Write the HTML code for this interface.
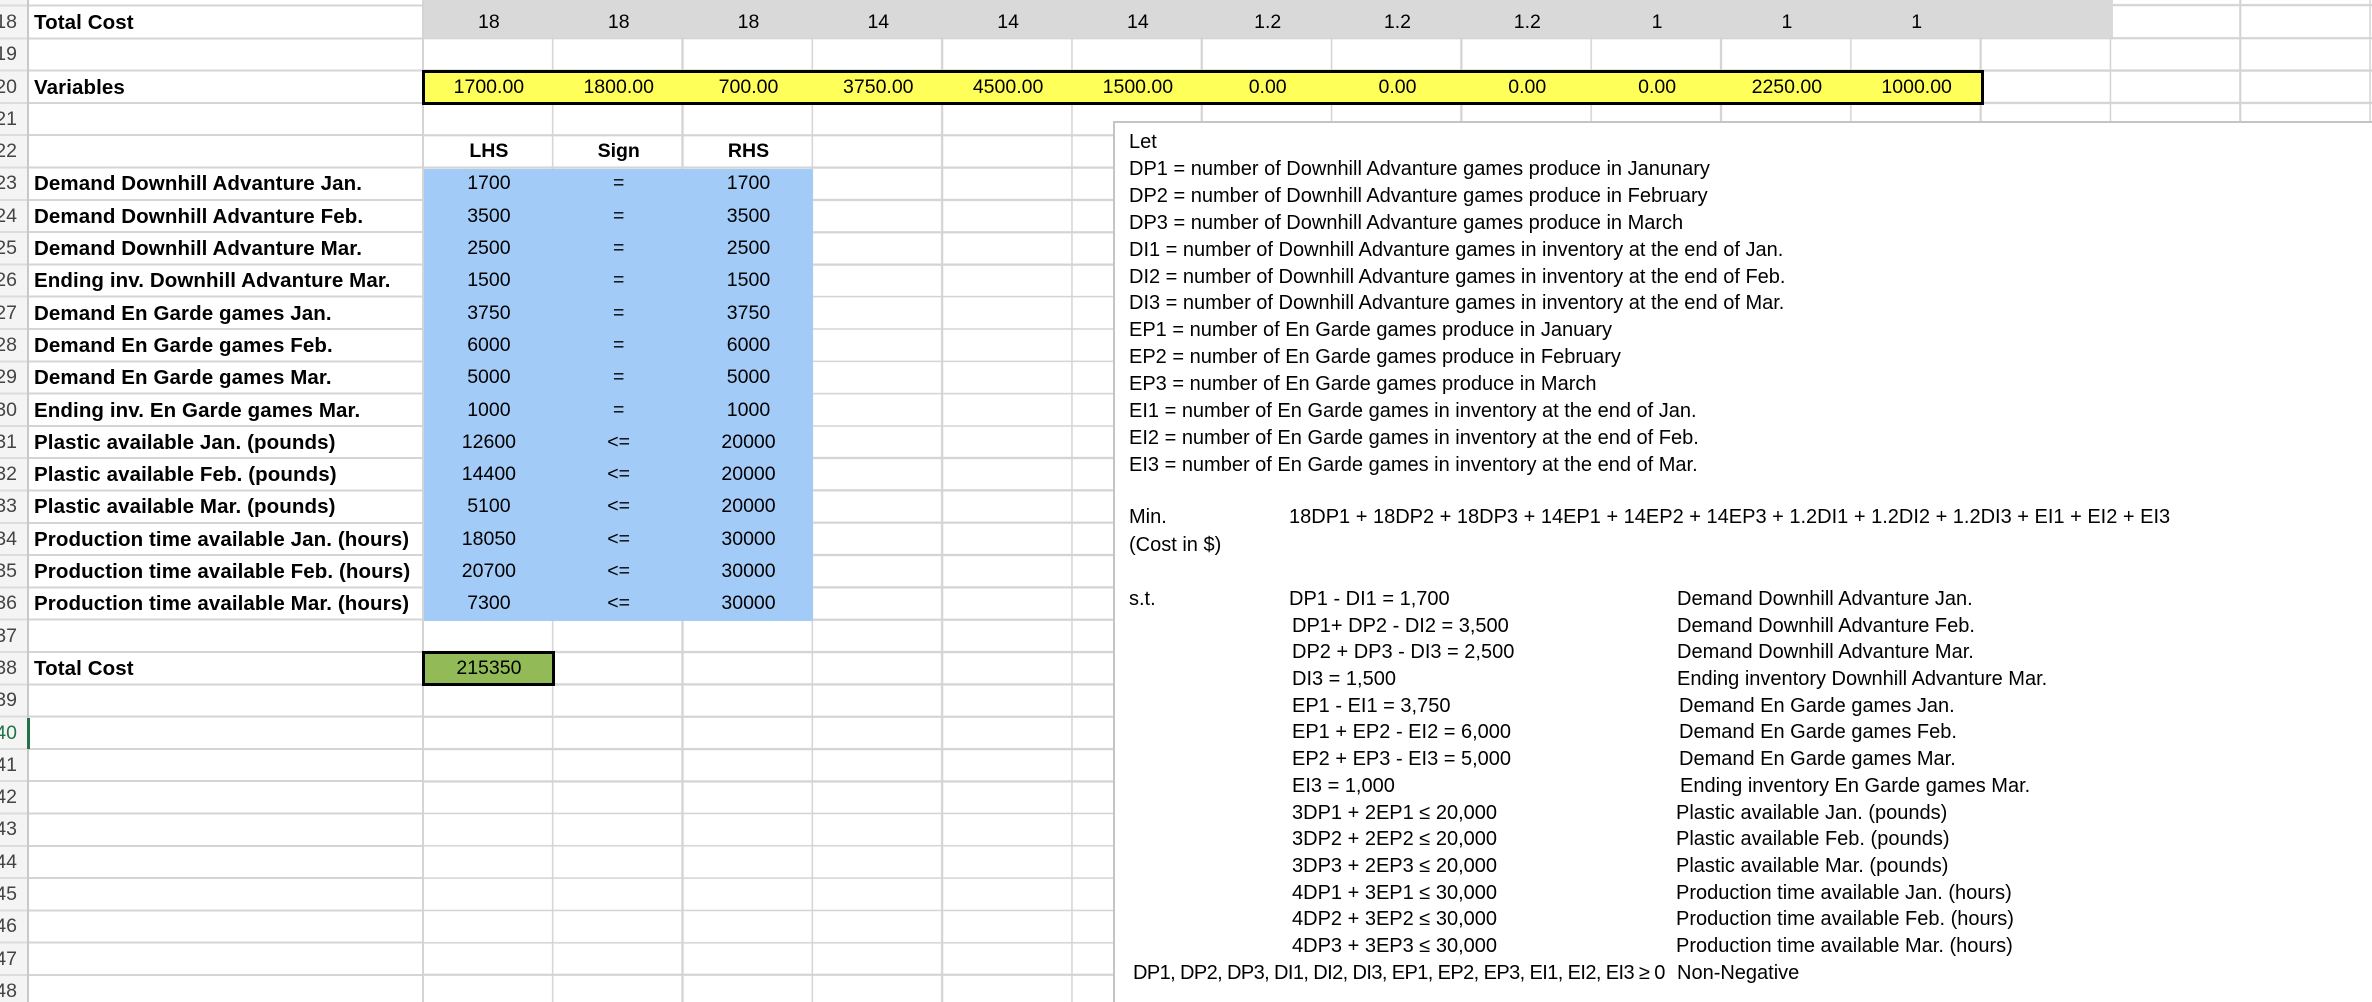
<!DOCTYPE html>
<html><head><meta charset="utf-8"><style>
*{margin:0;padding:0;box-sizing:border-box}
html{width:2372px;height:1002px;overflow:hidden}
body{width:2372px;height:1002px;overflow:hidden;position:relative;background:#fff;font-family:"Liberation Sans",sans-serif;font-size:19.5px;color:#000;
background-image:repeating-linear-gradient(180deg,transparent 0,transparent 30.3px,#d4d4d4 30.3px,#d4d4d4 32.3px),repeating-linear-gradient(90deg,transparent 0,transparent 127.8px,#d4d4d4 127.8px,#d4d4d4 129.8px);
background-position:0 7px,424px 0}
#rn{position:absolute;left:0;top:0;width:29px;height:1002px;background-color:#f4f4f4;border-right:2px solid #c8c8c8;background-image:repeating-linear-gradient(180deg,transparent 0,transparent 30.3px,#dcdcdc 30.3px,#dcdcdc 32.3px);background-position:0 7px}
#ca{position:absolute;left:29px;top:0;width:395px;height:1002px;background-color:#fff;border-right:2px solid #d4d4d4;background-image:repeating-linear-gradient(180deg,transparent 0,transparent 30.3px,#d4d4d4 30.3px,#d4d4d4 32.3px);background-position:0 7px}
.ov{position:absolute}
#rows{position:absolute;left:0;top:-25.3px;width:2372px}
.r{height:32.3px;line-height:31px;display:flex;white-space:nowrap}
.n{width:29px;text-align:right;padding-right:12px;color:#444;overflow:hidden;font-size:19.5px;direction:rtl}
.a{width:395px;padding-left:5px;font-weight:bold;font-size:20.5px;letter-spacing:0.1px}
.c{width:129.8px;text-align:center}
.b{font-weight:bold}
#tb{position:absolute;left:1113px;top:121px;width:1270px;height:890px;background:#fff;border:2px solid #c4c4c4}
.t{position:absolute;white-space:nowrap;line-height:26px;font-size:20px}
</style></head><body>
<div id="rn"></div><div id="ca"></div>
<div class="ov" style="left:424px;top:0;width:1689px;height:37.3px;background:#d9d9d9"></div>
<div class="ov" style="left:422px;top:70px;width:1562px;height:35px;background:#ffff5a;border:3px solid #000"></div>
<div class="ov" style="left:424px;top:168.5px;width:389px;height:452px;background:#a3cbf7"></div>
<div class="ov" style="left:422px;top:651px;width:133px;height:35px;background:#92bb57;border:3px solid #000"></div>
<div class="ov" style="left:27px;top:717.6px;width:3px;height:31px;background:#217346"></div>
<div id="rows">
<div class="r"><span class="n">17</span></div>
<div class="r"><span class="n">18</span><span class="a">Total Cost</span><span class="c">18</span><span class="c">18</span><span class="c">18</span><span class="c">14</span><span class="c">14</span><span class="c">14</span><span class="c">1.2</span><span class="c">1.2</span><span class="c">1.2</span><span class="c">1</span><span class="c">1</span><span class="c">1</span></div>
<div class="r"><span class="n">19</span></div>
<div class="r"><span class="n">20</span><span class="a">Variables</span><span class="c">1700.00</span><span class="c">1800.00</span><span class="c">700.00</span><span class="c">3750.00</span><span class="c">4500.00</span><span class="c">1500.00</span><span class="c">0.00</span><span class="c">0.00</span><span class="c">0.00</span><span class="c">0.00</span><span class="c">2250.00</span><span class="c">1000.00</span></div>
<div class="r"><span class="n">21</span></div>
<div class="r"><span class="n">22</span><span class="a"></span><span class="c b">LHS</span><span class="c b">Sign</span><span class="c b">RHS</span></div>
<div class="r"><span class="n">23</span><span class="a">Demand Downhill Advanture Jan.</span><span class="c">1700</span><span class="c">=</span><span class="c">1700</span></div>
<div class="r"><span class="n">24</span><span class="a">Demand Downhill Advanture Feb.</span><span class="c">3500</span><span class="c">=</span><span class="c">3500</span></div>
<div class="r"><span class="n">25</span><span class="a">Demand Downhill Advanture Mar.</span><span class="c">2500</span><span class="c">=</span><span class="c">2500</span></div>
<div class="r"><span class="n">26</span><span class="a">Ending inv. Downhill Advanture Mar.</span><span class="c">1500</span><span class="c">=</span><span class="c">1500</span></div>
<div class="r"><span class="n">27</span><span class="a">Demand En Garde games Jan.</span><span class="c">3750</span><span class="c">=</span><span class="c">3750</span></div>
<div class="r"><span class="n">28</span><span class="a">Demand En Garde games Feb.</span><span class="c">6000</span><span class="c">=</span><span class="c">6000</span></div>
<div class="r"><span class="n">29</span><span class="a">Demand En Garde games Mar.</span><span class="c">5000</span><span class="c">=</span><span class="c">5000</span></div>
<div class="r"><span class="n">30</span><span class="a">Ending inv. En Garde games Mar.</span><span class="c">1000</span><span class="c">=</span><span class="c">1000</span></div>
<div class="r"><span class="n">31</span><span class="a">Plastic available Jan. (pounds)</span><span class="c">12600</span><span class="c">&lt;=</span><span class="c">20000</span></div>
<div class="r"><span class="n">32</span><span class="a">Plastic available Feb. (pounds)</span><span class="c">14400</span><span class="c">&lt;=</span><span class="c">20000</span></div>
<div class="r"><span class="n">33</span><span class="a">Plastic available Mar. (pounds)</span><span class="c">5100</span><span class="c">&lt;=</span><span class="c">20000</span></div>
<div class="r"><span class="n">34</span><span class="a">Production time available Jan. (hours)</span><span class="c">18050</span><span class="c">&lt;=</span><span class="c">30000</span></div>
<div class="r"><span class="n">35</span><span class="a">Production time available Feb. (hours)</span><span class="c">20700</span><span class="c">&lt;=</span><span class="c">30000</span></div>
<div class="r"><span class="n">36</span><span class="a">Production time available Mar. (hours)</span><span class="c">7300</span><span class="c">&lt;=</span><span class="c">30000</span></div>
<div class="r"><span class="n">37</span></div>
<div class="r"><span class="n">38</span><span class="a">Total Cost</span><span class="c">215350</span></div>
<div class="r"><span class="n">39</span></div>
<div class="r"><span class="n" style="color:#217346">40</span></div>
<div class="r"><span class="n">41</span></div>
<div class="r"><span class="n">42</span></div>
<div class="r"><span class="n">43</span></div>
<div class="r"><span class="n">44</span></div>
<div class="r"><span class="n">45</span></div>
<div class="r"><span class="n">46</span></div>
<div class="r"><span class="n">47</span></div>
<div class="r"><span class="n">48</span></div>
</div>
<div id="tb"></div>
<div class="t" style="left:1129px;top:129px">Let</div>
<div class="t" style="left:1129px;top:156px">DP1 = number of Downhill Advanture games produce in Janunary</div>
<div class="t" style="left:1129px;top:183px">DP2 = number of Downhill Advanture games produce in February</div>
<div class="t" style="left:1129px;top:210px">DP3 = number of Downhill Advanture games produce in March</div>
<div class="t" style="left:1129px;top:237px">DI1 = number of Downhill Advanture games in inventory at the end of Jan.</div>
<div class="t" style="left:1129px;top:264px">DI2 = number of Downhill Advanture games in inventory at the end of Feb.</div>
<div class="t" style="left:1129px;top:290px">DI3 = number of Downhill Advanture games in inventory at the end of Mar.</div>
<div class="t" style="left:1129px;top:317px">EP1 = number of En Garde games produce in January</div>
<div class="t" style="left:1129px;top:344px">EP2 = number of En Garde games produce in February</div>
<div class="t" style="left:1129px;top:371px">EP3 = number of En Garde games produce in March</div>
<div class="t" style="left:1129px;top:398px">EI1 = number of En Garde games in inventory at the end of Jan.</div>
<div class="t" style="left:1129px;top:425px">EI2 = number of En Garde games in inventory at the end of Feb.</div>
<div class="t" style="left:1129px;top:452px">EI3 = number of En Garde games in inventory at the end of Mar.</div>
<div class="t" style="left:1129px;top:504px">Min.</div>
<div class="t" style="left:1289px;top:504px">18DP1 + 18DP2 + 18DP3 + 14EP1 + 14EP2 + 14EP3 + 1.2DI1 + 1.2DI2 + 1.2DI3 + EI1 + EI2 + EI3</div>
<div class="t" style="left:1129px;top:532px">(Cost in $)</div>
<div class="t" style="left:1129px;top:586px">s.t.</div>
<div class="t" style="left:1289px;top:586px">DP1 - DI1 = 1,700</div>
<div class="t" style="left:1292px;top:613px">DP1+ DP2 - DI2 = 3,500</div>
<div class="t" style="left:1292px;top:639px">DP2 + DP3 - DI3 = 2,500</div>
<div class="t" style="left:1292px;top:666px">DI3 = 1,500</div>
<div class="t" style="left:1292px;top:693px">EP1 - EI1 = 3,750</div>
<div class="t" style="left:1292px;top:719px">EP1 + EP2 - EI2 = 6,000</div>
<div class="t" style="left:1292px;top:746px">EP2 + EP3 - EI3 = 5,000</div>
<div class="t" style="left:1292px;top:773px">EI3 = 1,000</div>
<div class="t" style="left:1292px;top:800px">3DP1 + 2EP1 ≤ 20,000</div>
<div class="t" style="left:1292px;top:826px">3DP2 + 2EP2 ≤ 20,000</div>
<div class="t" style="left:1292px;top:853px">3DP3 + 2EP3 ≤ 20,000</div>
<div class="t" style="left:1292px;top:880px">4DP1 + 3EP1 ≤ 30,000</div>
<div class="t" style="left:1292px;top:906px">4DP2 + 3EP2 ≤ 30,000</div>
<div class="t" style="left:1292px;top:933px">4DP3 + 3EP3 ≤ 30,000</div>
<div class="t" style="left:1133px;top:960px;letter-spacing:-0.6px">DP1, DP2, DP3, DI1, DI2, DI3, EP1, EP2, EP3, EI1, EI2, EI3 ≥ 0</div>
<div class="t" style="left:1677px;top:586px">Demand Downhill Advanture Jan.</div>
<div class="t" style="left:1677px;top:613px">Demand Downhill Advanture Feb.</div>
<div class="t" style="left:1677px;top:639px">Demand Downhill Advanture Mar.</div>
<div class="t" style="left:1677px;top:666px">Ending inventory Downhill Advanture Mar.</div>
<div class="t" style="left:1679px;top:693px">Demand En Garde games Jan.</div>
<div class="t" style="left:1679px;top:719px">Demand En Garde games Feb.</div>
<div class="t" style="left:1679px;top:746px">Demand En Garde games Mar.</div>
<div class="t" style="left:1680px;top:773px">Ending inventory En Garde games Mar.</div>
<div class="t" style="left:1676px;top:800px">Plastic available Jan. (pounds)</div>
<div class="t" style="left:1676px;top:826px">Plastic available Feb. (pounds)</div>
<div class="t" style="left:1676px;top:853px">Plastic available Mar. (pounds)</div>
<div class="t" style="left:1676px;top:880px">Production time available Jan. (hours)</div>
<div class="t" style="left:1676px;top:906px">Production time available Feb. (hours)</div>
<div class="t" style="left:1676px;top:933px">Production time available Mar. (hours)</div>
<div class="t" style="left:1677px;top:960px">Non-Negative</div>
</body></html>
